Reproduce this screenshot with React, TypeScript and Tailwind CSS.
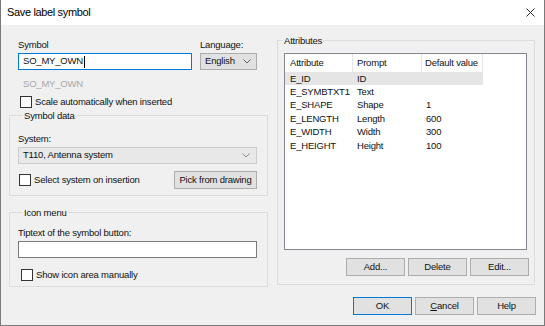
import clsx from "clsx";

const rows = [
  { attr: "E_ID", prompt: "ID", value: "" },
  { attr: "E_SYMBTXT1", prompt: "Text", value: "" },
  { attr: "E_SHAPE", prompt: "Shape", value: "1" },
  { attr: "E_LENGTH", prompt: "Length", value: "600" },
  { attr: "E_WIDTH", prompt: "Width", value: "300" },
  { attr: "E_HEIGHT", prompt: "Height", value: "100" },
];

const Chevron = ({ color = "#606060" }: { color?: string }) => (
  <svg width="8" height="5" viewBox="0 0 8 5">
    <path d="M0.5 0.5 L4 4 L7.5 0.5" stroke={color} fill="none" strokeWidth="1" />
  </svg>
);

const Check = ({ label, className }: { label: string; className?: string }) => (
  <div className={clsx("flex h-[13px] items-center", className)}>
    <span className="h-[12px] w-[12px] shrink-0 border border-[#333333] bg-white" />
    <span className="ml-[3px] leading-[13px]">{label}</span>
  </div>
);

const Btn = ({
  children,
  primary,
  className,
}: {
  children: React.ReactNode;
  primary?: boolean;
  className?: string;
}) => (
  <button
    type="button"
    className={clsx(
      "flex h-[18px] w-[59px] items-center justify-center bg-[#e1e1e1] leading-none",
      primary ? "border border-[#0078d7]" : "border border-[#adadad]",
      className
    )}
  >
    {children}
  </button>
);

const Group = ({
  title,
  className,
  children,
}: {
  title: string;
  className?: string;
  children: React.ReactNode;
}) => (
  <fieldset className={clsx("border border-[#dcdcdc]", className)}>
    <legend className="ml-[5px] px-[1px] leading-[13px]">{title}</legend>
    {children}
  </fieldset>
);

export default function App() {
  return (
    <div className="flex h-[326px] w-[545px] flex-col border-x border-b border-[#7a7a7a] bg-[#f0f0f0] font-['Liberation_Sans',Arial,sans-serif] text-[9.5px] tracking-[-0.2px] text-[#111111]">
      {/* title bar */}
      <div className="flex h-[25px] shrink-0 items-center justify-between bg-white pl-[6px] pr-[9px]">
        <span className="text-[11px] tracking-[-0.35px] text-black">Save label symbol</span>
        <svg width="9" height="9" viewBox="0 0 9 9">
          <path d="M0.5 0.5 L8.5 8.5 M8.5 0.5 L0.5 8.5" stroke="#2b2b2b" strokeWidth="1" />
        </svg>
      </div>

      <div className="flex">
        {/* left column */}
        <div className="ml-[8px] flex w-[259px] flex-col pt-[13px]">
          <div className="flex pl-[9px]">
            <div className="flex w-[174px] flex-col">
              <span className="leading-[13px]">Symbol</span>
              <div className="mt-[2px] flex h-[17px] items-center border border-[#0078d7] bg-white pl-[4px]">
                <span>SO_MY_OWN</span>
                <span className="ml-[1px] h-[12px] w-px bg-black" />
              </div>
            </div>
            <div className="ml-[8px] flex w-[57px] flex-col">
              <span className="leading-[13px]">Language:</span>
              <div className="mt-[2px] flex h-[17px] items-center justify-between border border-[#adadad] bg-[#e1e1e1] pl-[4px] pr-[5px]">
                <span>English</span>
                <Chevron />
              </div>
            </div>
          </div>
          <span className="mt-[7px] pl-[14px] leading-[13px] text-[#a8a8a8]">SO_MY_OWN</span>
          <Check label="Scale automatically when inserted" className="mt-[5px] pl-[11px]" />

          <Group title="Symbol data" className="mt-[1px] px-[8px] pb-[7px] pr-[10px]">
            <div className="mt-[10px] leading-[13px]">System:</div>
            <div className="mt-[2px] flex h-[17px] items-center justify-between border border-[#cccccc] bg-[#e8e8e8] pl-[4px] pr-[6px]">
              <span>T110, Antenna system</span>
              <Chevron color="#8a8a8a" />
            </div>
            <div className="mt-[7px] flex h-[17px] items-center justify-between">
              <Check label="Select system on insertion" className="ml-[1px]" />
              <Btn className="h-[17px] w-[83px]">Pick from drawing</Btn>
            </div>
          </Group>

          <Group title="Icon menu" className="mt-[10px] px-[8px] pb-[5px] pr-[10px]">
            <div className="mt-[7px] leading-[13px]">Tiptext of the symbol button:</div>
            <div className="mt-[2px] h-[17px] border border-[#7a7a7a] bg-white" />
            <Check label="Show icon area manually" className="ml-[3px] mt-[10px]" />
          </Group>
        </div>

        {/* right column */}
        <div className="ml-[9px] flex w-[258px] flex-col pt-[9px]">
          <Group title="Attributes" className="pb-[8px]">
            <div className="ml-[6px] mt-[6px] h-[197px] w-[243px] border border-[#828790] bg-white">
              <div className="flex h-[18px]">
                <div className="flex w-[68px] items-center border-r border-[#e5e5e5] pl-[5px]">Attribute</div>
                <div className="flex w-[69px] items-center border-r border-[#e5e5e5] pl-[4px]">Prompt</div>
                <div className="flex w-[61px] items-center border-r border-[#e5e5e5] pl-[3px]">Default value</div>
              </div>
              {rows.map((r, i) => (
                <div
                  key={r.attr}
                  className={clsx("flex h-[13.4px] w-[198px] items-center", i === 0 && "bg-[#e5e5e5]")}
                >
                  <div className="w-[68px] pl-[5px]">{r.attr}</div>
                  <div className="w-[69px] pl-[4px]">{r.prompt}</div>
                  <div className="w-[61px] pl-[4px]">{r.value}</div>
                </div>
              ))}
            </div>
            <div className="mt-[8px] flex justify-end gap-[3px] pr-[5px]">
              <Btn>Add...</Btn>
              <Btn>Delete</Btn>
              <Btn>Edit...</Btn>
            </div>
          </Group>
        </div>
      </div>

      <div className="mt-[10px] flex justify-end gap-[3px] pr-[8px]">
        <Btn primary className="h-[17px]">OK</Btn>
        <Btn className="h-[17px]">
          <span className="underline">C</span>ancel
        </Btn>
        <Btn className="h-[17px]">Help</Btn>
      </div>
    </div>
  );
}
